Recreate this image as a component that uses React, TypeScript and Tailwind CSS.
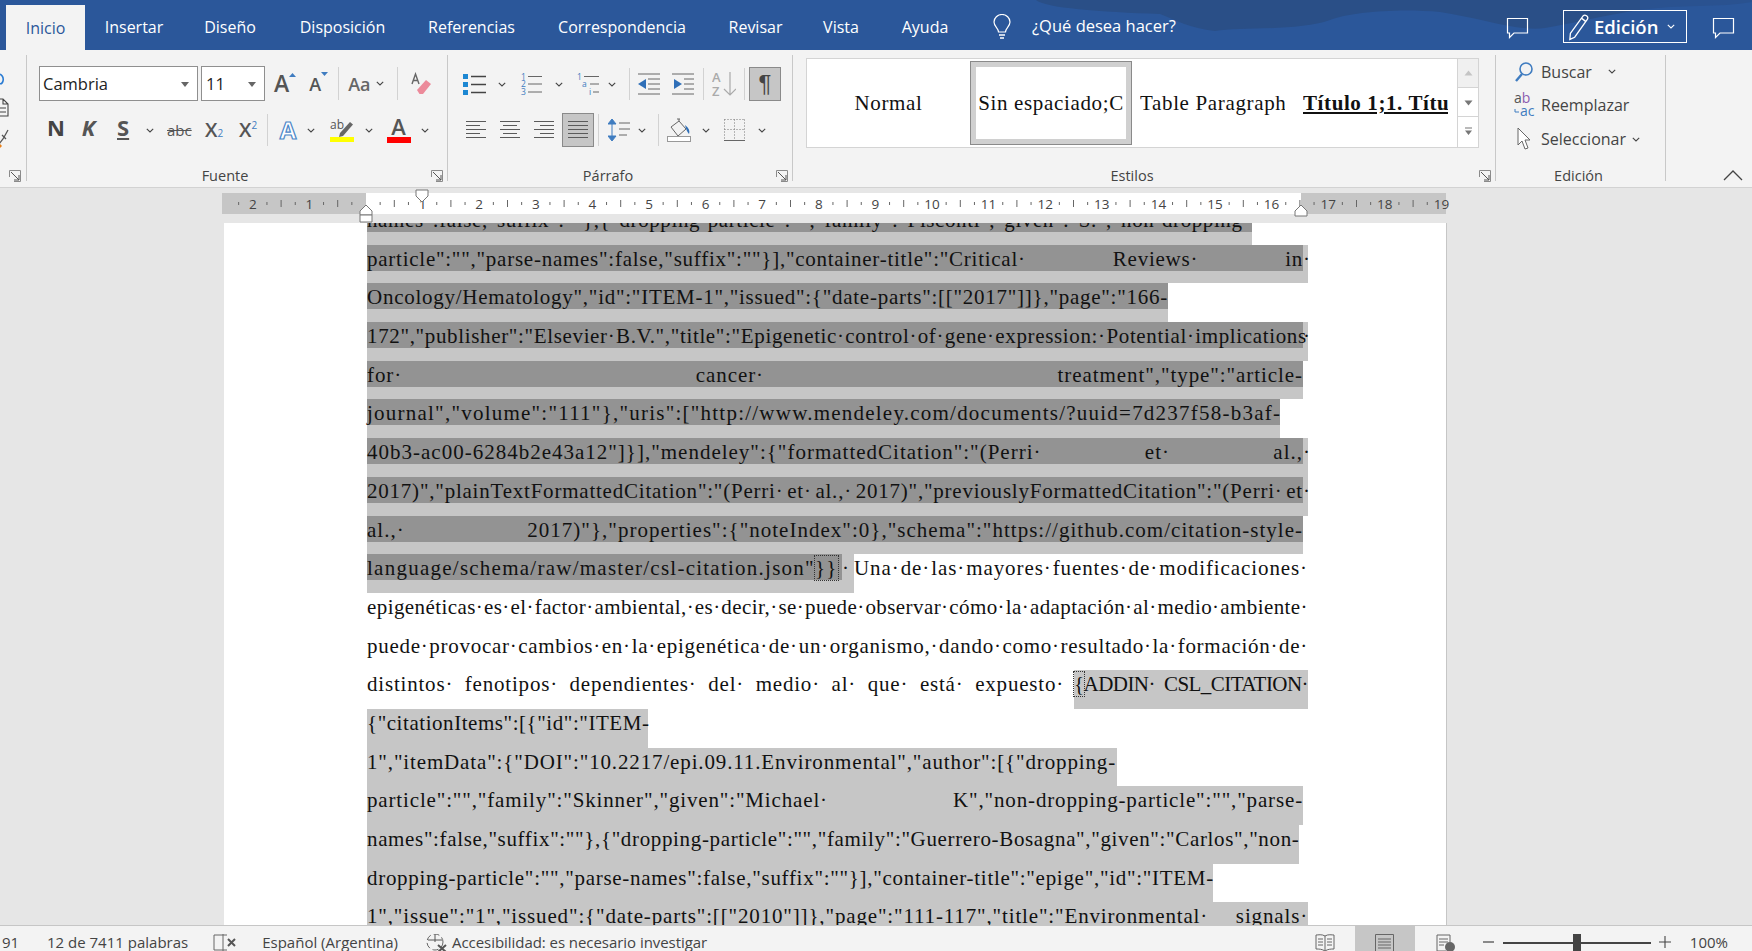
import React from "react"

const UI = "font-['Open_Sans',sans-serif]"
const DOC = "font-['Liberation_Serif',serif]"

const TABS = [
  { label: "Insertar", cls: "w-[98px]" },
  { label: "Diseño", cls: "w-[94px]" },
  { label: "Disposición", cls: "w-[131px]" },
  { label: "Referencias", cls: "w-[127px]" },
  { label: "Correspondencia", cls: "w-[174px]" },
  { label: "Revisar", cls: "w-[93px]" },
  { label: "Vista", cls: "w-[78px]" },
  { label: "Ayuda", cls: "w-[90px]" },
]

function Chevron({ className = "", color = "#444" }: { className?: string; color?: string }) {
  return (
    <svg className={`h-[5px] w-[8px] shrink-0 ${className}`} viewBox="0 0 8 5" fill="none">
      <path d="M0.8 0.8 L4 4 L7.2 0.8" stroke={color} strokeWidth="1.1" />
    </svg>
  )
}

function Launcher() {
  return (
    <svg className="h-[12px] w-[12px]" viewBox="0 0 12 12" fill="none">
      <path d="M0.5 7 V0.5 H11.5 V11.5 H5" stroke="#8a8a8a" />
      <path d="M2 2 L10 10 M10 5 V10 H5" stroke="#555" />
    </svg>
  )
}

function Sep({ className = "h-[33px]" }: { className?: string }) {
  return <div className={`w-px shrink-0 bg-[#d2d2d2] ${className}`} />
}

function GroupSep() {
  return <div className="mt-[5px] h-[126px] w-px shrink-0 bg-[#c8c8c8]" />
}

function GroupFooter({ label, launcher = true }: { label: string; launcher?: boolean }) {
  return (
    <div className="mt-auto flex h-[22px] items-center pr-[4px]">
      <div className="flex-1" />
      <span className="text-[14.5px] leading-[22px] text-[#444]">{label}</span>
      <div className="flex-1" />
      {launcher && (
        <div className="flex w-[20px] justify-end">
          <Launcher />
        </div>
      )}
    </div>
  )
}

function Lines({ rows, w = 20 }: { rows: [number, number][]; w?: number }) {
  return (
    <svg className="h-[20px] shrink-0" width={w} viewBox={`0 0 ${w} 20`} fill="none">
      {rows.map(([a, b], i) => (
        <path key={i} d={`M${a} ${1.5 + i * 4} H${b}`} stroke="#5a5a5a" strokeWidth="1" />
      ))}
    </svg>
  )
}

function Comment({ className = "" }: { className?: string }) {
  return (
    <svg className={`h-[22px] w-[23px] ${className}`} viewBox="0 0 23 22" fill="none">
      <path d="M1.5 1.5 H21.5 V16 H8 L3.5 20.5 V16 H1.5 Z" stroke="#fff" strokeWidth="1.2" />
    </svg>
  )
}

function TitleBar() {
  return (
    <div className={`relative flex h-[50px] shrink-0 overflow-hidden bg-[#2b579a] text-[16px] text-white ${UI}`}>
      <svg className="absolute left-0 top-0 h-[50px] w-[1752px]" viewBox="0 0 1752 50">
        <path d="M1036 0 C1045 8 1100 12 1160 14 C1175 20 1190 28 1215 31 C1240 27 1300 31 1330 20 C1350 12 1400 8 1440 12 C1480 18 1520 32 1545 28 C1570 24 1600 16 1640 10 V0 Z" fill="#2a4f87" />
        <path d="M1640 10 C1680 4 1720 8 1752 2 V0 H1640 Z" fill="#2a5290" />
      </svg>
      <div className="relative ml-[6px] mt-[5px] flex h-[45px] w-[79px] items-center justify-center bg-[#f3f3f3] text-[#2b579a]">Inicio</div>
      {TABS.map((t) => (
        <div key={t.label} className={`relative flex h-full items-center justify-center pt-[4px] ${t.cls}`}>
          {t.label}
        </div>
      ))}
      <svg className="relative ml-[22px] mt-[14px] h-[26px] w-[20px]" viewBox="0 0 20 26" fill="none">
        <path d="M6.5 18 C6.5 14 2 12.5 2 8 A8 7.5 0 0 1 18 8 C18 12.5 13.5 14 13.5 18 Z" stroke="#fff" strokeWidth="1.2" />
        <path d="M7 21 H13 M8 24 H12" stroke="#fff" strokeWidth="1.4" />
      </svg>
      <div className="relative ml-[20px] flex items-center pt-[3px] text-[16.5px]">¿Qué desea hacer?</div>
      <Comment className="relative ml-auto mt-[17px]" />
      <div className="relative ml-[34px] mt-[10px] flex h-[33px] w-[124px] items-center border border-white pl-[3px]">
        <svg className="h-[28px] w-[24px]" viewBox="0 0 22 26" fill="none">
          <path d="M3 19 L15 2.5 C16.5 1 20 3 19 5.5 L7 22.5 L2.5 24.5 Z M13.5 5 L17.5 8" stroke="#fff" strokeWidth="1.2" />
        </svg>
        <span className="ml-[3px] text-[18.5px] font-semibold">Edición</span>
        <Chevron className="ml-[9px] h-[4px] w-[6px]" color="#fff" />
      </div>
      <Comment className="relative ml-[25px] mr-[17px] mt-[17px]" />
    </div>
  )
}

function ClipboardStub() {
  return (
    <div className="relative h-full w-[26px] shrink-0">
      <svg className="mt-[5px] h-[100px] w-[12px]" viewBox="0 0 12 100" fill="none">
        <path d="M-2 20 C1 18 4 22 3 26 C2 30 -1 29 -2 27" stroke="#2b7cd3" strokeWidth="1.6" />
        <path d="M-2 44 H3 L8 49 V61 H-2 Z M3 44 V49 H8 M-2 53 H6 M-2 57 H6" stroke="#444" strokeWidth="1.1" />
        <path d="M8 75 L3 84 L-1 89 M2 80 L6 84 M0 90 L-3 94" stroke="#555" strokeWidth="1.3" />
        <path d="M-1 90 L1 92" stroke="#e8801a" strokeWidth="3" />
      </svg>
      <div className="absolute bottom-[5px] left-[9px]">
        <Launcher />
      </div>
    </div>
  )
}

function FontGroup() {
  return (
    <div className="flex h-full w-[420px] shrink-0 flex-col">
      <div className="ml-[12px] mt-[16px] flex h-[35px] items-center">
        <div className="flex h-[35px] w-[159px] items-center justify-between border border-[#8f8f8f] bg-white pl-[3px] pr-[8px] pt-[1px] text-[16.5px] text-[#222]">
          Cambria
          <svg className="h-[5px] w-[8px]" viewBox="0 0 8 5"><path d="M0 0 H8 L4 5 Z" fill="#666" /></svg>
        </div>
        <div className="ml-[3px] flex h-[35px] w-[64px] items-center justify-between border border-[#8f8f8f] bg-white pl-[4px] pr-[8px] pt-[1px] text-[16.5px] text-[#222]">
          11
          <svg className="h-[5px] w-[8px]" viewBox="0 0 8 5"><path d="M0 0 H8 L4 5 Z" fill="#666" /></svg>
        </div>
        <span className="ml-[9px] text-[23px] font-semibold leading-none text-[#555]">A</span>
        <svg className="mb-[18px] h-[4px] w-[7px]" viewBox="0 0 7 4"><path d="M0 4 L3.5 0 L7 4 Z" fill="#3f7cc0" /></svg>
        <span className="ml-[13px] text-[18px] font-semibold leading-none text-[#555]">A</span>
        <svg className="mb-[20px] h-[4px] w-[7px]" viewBox="0 0 7 4"><path d="M0 0 H7 L3.5 4 Z" fill="#3f7cc0" /></svg>
        <Sep className="ml-[10px] h-[33px]" />
        <span className="ml-[9px] text-[18px] font-semibold leading-none text-[#666]">Aa</span>
        <Chevron className="ml-[6px]" />
        <Sep className="ml-[13px] h-[33px]" />
        <svg className="ml-[13px] h-[24px] w-[21px]" viewBox="0 0 21 24" fill="none">
          <path d="M1 12 L4.5 2 L8 12 M2.5 8.5 H6.5" stroke="#666" strokeWidth="1.4" />
          <path d="M6 18 L15 8 L20 12 L12 22 L8.5 22 Z" fill="#ec8a9a" />
        </svg>
      </div>
      <div className="ml-[20px] mt-[12px] flex h-[34px] items-center text-[#444]">
        <span className="mb-[6px] w-[16px] text-center text-[22px] font-bold leading-none">N</span>
        <span className="mb-[6px] ml-[18px] w-[15px] text-center text-[22px] font-bold italic leading-none text-[#555]">K</span>
        <span className="mb-[6px] ml-[21px] w-[12px] text-center text-[22px] font-bold leading-none text-[#555] underline">S</span>
        <Chevron className="ml-[17px]" />
        <span className="ml-[13px] w-[24px] text-center text-[15px] leading-none text-[#555] line-through">abc</span>
        <span className="ml-[14px] flex w-[22px] items-baseline text-[20px] font-semibold leading-none text-[#555]">
          X<span className="text-[10px] font-normal text-[#3f7cc0]">2</span>
        </span>
        <span className="ml-[12px] flex w-[22px] items-start text-[20px] font-semibold leading-none text-[#555]">
          X<span className="text-[10px] font-normal text-[#3f7cc0]">2</span>
        </span>
        <Sep className="ml-[6px] h-[32px]" />
        <span className="ml-[11px] w-[18px] text-center text-[24px] font-bold leading-none text-white [-webkit-text-stroke:1.2px_#4a86c8]">A</span>
        <Chevron className="ml-[10px]" />
        <svg className="ml-[15px] h-[24px] w-[24px]" viewBox="0 0 24 24" fill="none">
          <text x="0" y="11" fontSize="12" fill="#555" fontFamily="Open Sans">ab</text>
          <path d="M10 15 L20 4 L23 6.5 L13 18 L9 19 Z" fill="#666" />
          <rect x="0" y="19" width="24" height="5.5" fill="#ffff00" />
        </svg>
        <Chevron className="ml-[11px]" />
        <div className="ml-[14px] flex w-[23px] flex-col items-center">
          <span className="text-[22px] font-semibold leading-[19px] text-[#555]">A</span>
          <div className="mt-[1px] h-[6px] w-[24px] bg-[#ff0000]" />
        </div>
        <Chevron className="ml-[11px]" />
      </div>
      <GroupFooter label="Fuente" />
    </div>
  )
}

function ListIcon({ marks, lines }: { marks: [string, number][]; lines: string }) {
  return (
    <svg className="h-[22px] w-[23px] overflow-visible" viewBox="0 0 23 22" fill="none">
      {marks.map(([m, x], i) => (
        <text key={i} x={x} y={6.5 + i * 7.7} fontSize="8.5" fill="#3f7cc0" fontFamily="Open Sans">{m}</text>
      ))}
      <path d={lines} stroke="#666" />
    </svg>
  )
}

function ParagraphGroup() {
  return (
    <div className="flex h-full w-[344px] shrink-0 flex-col">
      <div className="ml-[15px] mt-[17px] flex h-[34px] items-center">
        <svg className="h-[22px] w-[23px]" viewBox="0 0 23 22" fill="none">
          <rect x="0" y="1" width="5" height="5" fill="#1c87d2" />
          <rect x="0" y="9" width="5" height="5" fill="#1c87d2" />
          <rect x="0" y="17" width="5" height="5" fill="#1c87d2" />
          <path d="M8 3.5 H23 M8 11.5 H23 M8 19.5 H23" stroke="#444" strokeWidth="1.4" />
        </svg>
        <Chevron className="ml-[12px]" />
        <div className="ml-[14px]">
          <ListIcon marks={[["1", 1], ["2", 1], ["3", 1]]} lines="M8 3.5 H22 M8 11 H22 M8 19 H22" />
        </div>
        <Chevron className="ml-[12px]" />
        <div className="ml-[14px]">
          <ListIcon marks={[["1", 0], ["a", 5], ["i", 12]]} lines="M7 3.5 H22 M13 11 H22 M16 19 H22" />
        </div>
        <Chevron className="ml-[8px]" />
        <Sep className="ml-[13px] h-[32px]" />
        <svg className="ml-[8px] h-[22px] w-[22px]" viewBox="0 0 22 22" fill="none">
          <path d="M0 1 H22 M10 6 H22 M10 11 H22 M10 16 H22 M0 21 H22" stroke="#666" />
          <path d="M8 6 V16 L0 11 Z" fill="#2f6fb8" />
        </svg>
        <svg className="ml-[12px] h-[22px] w-[22px]" viewBox="0 0 22 22" fill="none">
          <path d="M0 1 H22 M12 6 H22 M12 11 H22 M12 16 H22 M0 21 H22" stroke="#666" />
          <path d="M2 6 V16 L10 11 Z" fill="#2f6fb8" />
        </svg>
        <Sep className="ml-[9px] h-[32px]" />
        <svg className="ml-[8px] h-[26px] w-[24px]" viewBox="0 0 24 26" fill="none">
          <text x="0" y="11" fontSize="13" fill="#aaa" fontFamily="Open Sans" fontWeight="600">A</text>
          <text x="0" y="25" fontSize="13" fill="#aaa" fontFamily="Open Sans" fontWeight="600">Z</text>
          <path d="M18 1 V24 M12 18 L18 24 L24 18" stroke="#aaa" strokeWidth="1.2" />
        </svg>
        <Sep className="ml-[8px] h-[32px]" />
        <div className="ml-[4px] flex h-[34px] w-[32px] items-center justify-center border border-[#8a8a8a] bg-[#c6c6c6] text-[24px] leading-none text-[#444] font-['Liberation_Sans',sans-serif]">¶</div>
      </div>
      <div className="ml-[18px] mt-[12px] flex h-[34px] items-center">
        <Lines rows={[[0, 20], [0, 14], [0, 20], [0, 14], [0, 20]]} />
        <div className="ml-[14px]"><Lines rows={[[0, 20], [3, 17], [0, 20], [3, 17], [0, 20]]} /></div>
        <div className="ml-[14px]"><Lines rows={[[0, 20], [6, 20], [0, 20], [6, 20], [0, 20]]} /></div>
        <div className="ml-[8px] flex h-[34px] w-[32px] items-center justify-center border border-[#8a8a8a] bg-[#c6c6c6]">
          <Lines rows={[[0, 20], [0, 20], [0, 20], [0, 20], [0, 20]]} />
        </div>
        <Sep className="ml-[4px] h-[32px]" />
        <svg className="ml-[9px] h-[24px] w-[22px]" viewBox="0 0 22 24" fill="none">
          <path d="M4 5 V19 M4 1 L8 6 H0 Z M4 23 L8 18 H0 Z" stroke="#3f7cc0" fill="#3f7cc0" strokeWidth="1" />
          <path d="M11 5 H22 M11 11 H22 M11 17 H19" stroke="#666" />
        </svg>
        <Chevron className="ml-[8px]" />
        <Sep className="ml-[12px] h-[32px]" />
        <svg className="ml-[8px] h-[24px] w-[24px]" viewBox="0 0 24 24" fill="none">
          <path d="M4 9 L12 3 L19 11 L11 18 Z M12 3 V1 M10 1 H13" stroke="#666" />
          <path d="M18 7 C22 10 23 13 22 16 C20 14 19 11 18 7" fill="#2f6fb8" />
          <rect x="0.5" y="18.5" width="23" height="5" fill="#fff" stroke="#999" />
        </svg>
        <Chevron className="ml-[11px]" />
        <svg className="ml-[14px] h-[22px] w-[21px]" viewBox="0 0 21 22" fill="none">
          <path d="M0.5 0.5 H20.5 M0.5 0.5 V21 M20.5 0.5 V21 M10.5 0.5 V21 M0.5 10.5 H20.5" stroke="#777" strokeDasharray="1 2" />
          <path d="M0 21.5 H21" stroke="#666" />
        </svg>
        <Chevron className="ml-[13px]" />
      </div>
      <GroupFooter label="Párrafo" />
    </div>
  )
}

function ScrollBtn({ dir }: { dir: "up" | "down" | "more" }) {
  return (
    <div className={`flex h-[29px] items-center justify-center border-b border-[#d4d4d4] last:border-b-0 ${dir === "up" ? "bg-[#f0f0f0]" : "bg-white"}`}>
      <svg className="h-[9px] w-[9px]" viewBox="0 0 9 9">
        {dir === "up" && <path d="M0.5 6.5 L4.5 1.5 L8.5 6.5 Z" fill="#c4c4c4" />}
        {dir === "down" && <path d="M0.5 2.5 H8.5 L4.5 7.5 Z" fill="#777" />}
        {dir === "more" && <path d="M1 0.5 H8 V1.5 H1 Z M1 3.5 H8 L4.5 8 Z" fill="#777" />}
      </svg>
    </div>
  )
}

function StylesGroup() {
  return (
    <div className="flex h-full w-[702px] shrink-0 flex-col">
      <div className={`ml-[13px] mt-[8px] flex h-[90px] w-[673px] border border-[#d4d4d4] bg-white text-[21px] leading-none text-[#111] ${DOC}`}>
        <div className="flex w-[163px] items-center justify-center tracking-[0.65px]">Normal</div>
        <div className="mt-[2px] flex h-[84px] w-[162px] items-center justify-center overflow-hidden whitespace-nowrap border border-[#8a8a8a] bg-white outline-[5px] -outline-offset-[6px] outline-[#d0d0d0] [outline-style:solid] tracking-[0.65px]">
          Sin espaciado;C
        </div>
        <div className="ml-[8px] mr-[8px] flex w-[145px] items-center overflow-hidden whitespace-nowrap tracking-[0.65px]">Table Paragraph</div>
        <div className="ml-[10px] flex w-[145px] items-center overflow-hidden whitespace-nowrap font-bold underline tracking-[0.6px]">Título 1;1. Títu</div>
        <div className="ml-auto flex w-[21px] flex-col border-l border-[#d4d4d4]">
          <ScrollBtn dir="up" />
          <ScrollBtn dir="down" />
          <ScrollBtn dir="more" />
        </div>
      </div>
      <GroupFooter label="Estilos" />
    </div>
  )
}

function EditGroup() {
  return (
    <div className="flex h-full w-[169px] shrink-0 flex-col">
      <div className="ml-[18px] mt-[5px] flex flex-col text-[16px] leading-none text-[#444]">
        <div className="flex h-[33px] items-center">
          <svg className="h-[21px] w-[20px]" viewBox="0 0 20 21" fill="none">
            <circle cx="12" cy="8" r="6" stroke="#3f7cc0" strokeWidth="1.6" />
            <path d="M8 13 L2 20" stroke="#3f7cc0" strokeWidth="2.4" />
          </svg>
          <span className="ml-[7px]">Buscar</span>
          <Chevron className="ml-[16px]" />
        </div>
        <div className="flex h-[34px] items-center">
          <svg className="h-[26px] w-[22px]" viewBox="0 0 22 26">
            <text x="0" y="11" fontSize="14" fill="#555" fontFamily="Open Sans">a<tspan fill="#8a5cb0">b</tspan></text>
            <text x="6" y="24" fontSize="14" fill="#3f7cc0" fontFamily="Open Sans">ac</text>
            <path d="M1 17 V20 H5" stroke="#3f7cc0" fill="none" />
          </svg>
          <span className="ml-[5px]">Reemplazar</span>
        </div>
        <div className="flex h-[34px] items-center">
          <svg className="h-[24px] w-[20px]" viewBox="0 0 20 24" fill="none">
            <path d="M4 1 V18 L8 14 L11 22 L14 21 L11 13 L16 13 Z" stroke="#666" fill="#fff" />
          </svg>
          <span className="ml-[7px]">Seleccionar</span>
          <Chevron className="ml-[6px]" />
        </div>
      </div>
      <GroupFooter label="Edición" launcher={false} />
    </div>
  )
}

function Ribbon() {
  return (
    <div className={`flex h-[138px] shrink-0 border-b border-[#d2d2d2] bg-[#f3f3f3] ${UI}`}>
      <ClipboardStub />
      <GroupSep />
      <FontGroup />
      <GroupSep />
      <ParagraphGroup />
      <GroupSep />
      <StylesGroup />
      <GroupSep />
      <EditGroup />
      <GroupSep />
      <div className="flex flex-1 items-end justify-end pb-[6px] pr-[9px]">
        <svg className="h-[11px] w-[20px]" viewBox="0 0 20 11" fill="none">
          <path d="M1 10 L10 1 L19 10" stroke="#444" strokeWidth="1.3" />
        </svg>
      </div>
    </div>
  )
}

function Ruler() {
  const unit = 56.6
  const ticks: number[] = []
  for (let q = -10; q <= 76; q++) ticks.push(q)
  const nums = [-2, -1, 1, 2, 3, 4, 5, 6, 7, 8, 9, 10, 11, 12, 13, 14, 15, 16, 17, 18, 19]
  return (
    <svg className={`ml-[222px] block h-[21px] w-[1224px] overflow-visible ${UI}`} viewBox="0 0 1224 21">
      <rect width="1224" height="21" fill="#c6c6c6" />
      <rect x="144" width="935" height="21" fill="#fff" />
      {ticks.map((q) => {
        const x = 144 + (q * unit) / 4
        if (q % 4 === 0 || x < 3 || x > 1222) return null
        const long = Math.abs(q % 4) === 2
        return <path key={q} d={`M${x} ${long ? 7 : 9} V${long ? 14 : 12}`} stroke="#666" />
      })}
      {nums.map((n) => (
        <text key={n} x={144 + n * unit} y="15.5" fontSize="13.5" fill="#444" textAnchor="middle">{Math.abs(n)}</text>
      ))}
      <path d="M194 -3 H206 V3 L200 9 L194 3 Z" fill="#fff" stroke="#777" />
      <path d="M144 12 L150 18 V22 H138 V18 Z" fill="#fff" stroke="#777" />
      <path d="M138 22 H150 V29 H138 Z" fill="#fff" stroke="#777" />
      <path d="M1079 12 L1085 18 V23 H1073 V18 Z" fill="#fff" stroke="#777" />
    </svg>
  )
}

type Shaded = { text: string; light: string; dark: string; track: string; dot?: boolean }

const SHADED_TOP: Shaded[] = [
  { text: 'names":false,"suffix":""},{"dropping-particle":"","family":"Pisconti","given":"S.","non-dropping-', light: "w-[885px]", dark: "w-[885px]", track: "tracking-[0.6px]" },
  { text: 'particle":"","parse-names":false,"suffix":""}],"container-title":"Critical· Reviews· in', light: "w-[941px]", dark: "w-[936px]", track: "tracking-[0.75px]", dot: true },
  { text: 'Oncology/Hematology","id":"ITEM-1","issued":{"date-parts":[["2017"]]},"page":"166-', light: "w-[801px]", dark: "w-[801px]", track: "tracking-[0.74px]" },
  { text: '172","publisher":"Elsevier· B.V.","title":"Epigenetic· control· of· gene· expression:· Potential· implications', light: "w-[941px]", dark: "w-[936px]", track: "tracking-[0.65px]", dot: true },
  { text: 'for· cancer· treatment","type":"article-', light: "w-[936px]", dark: "w-[936px]", track: "tracking-[0.93px]" },
  { text: 'journal","volume":"111"},"uris":["http://www.mendeley.com/documents/?uuid=7d237f58-b3af-', light: "w-[913px]", dark: "w-[913px]", track: "tracking-[1.23px]" },
  { text: '40b3-ac00-6284b2e43a12"]}],"mendeley":{"formattedCitation":"(Perri· et· al.,', light: "w-[941px]", dark: "w-[936px]", track: "tracking-[1px]", dot: true },
  { text: '2017)","plainTextFormattedCitation":"(Perri· et· al.,· 2017)","previouslyFormattedCitation":"(Perri· et', light: "w-[941px]", dark: "w-[936px]", track: "tracking-[0.78px]", dot: true },
  { text: 'al.,· 2017)"},"properties":{"noteIndex":0},"schema":"https://github.com/citation-style-', light: "w-[936px]", dark: "w-[936px]", track: "tracking-[1.02px]" },
]

const SHADED_BOTTOM = [
  { text: '{"citationItems":[{"id":"ITEM-', cls: "w-[281px] tracking-[0.55px]" },
  { text: '1","itemData":{"DOI":"10.2217/epi.09.11.Environmental","author":[{"dropping-', cls: "w-[750px] tracking-[0.86px]" },
  { text: 'particle":"","family":"Skinner","given":"Michael· K","non-dropping-particle":"","parse-', cls: "w-[936px] tracking-[0.85px]" },
  { text: 'names":false,"suffix":""},{"dropping-particle":"","family":"Guerrero-Bosagna","given":"Carlos","non-', cls: "w-[932px] tracking-[0.65px]" },
  { text: 'dropping-particle":"","parse-names":false,"suffix":""}],"container-title":"epige","id":"ITEM-', cls: "w-[846px] tracking-[0.71px]" },
  { text: '1","issue":"1","issued":{"date-parts":[["2010"]]},"page":"111-117","title":"Environmental· signals·', cls: "w-[941px] tracking-[0.85px]" },
]

const FIT = "whitespace-nowrap leading-[28px] [word-spacing:-0.25em] [text-align-last:justify]"

function DocText() {
  return (
    <div className={`-mt-[17px] ml-[143px] w-[941px] text-[21px] text-[#111] ${DOC}`}>
      {SHADED_TOP.map((l) => (
        <div key={l.text} className={`h-[38.7px] bg-[#c6c6c6] ${l.light}`}>
          <div className="flex h-[26px]">
            <div className={`h-[26px] shrink-0 bg-[#939393] ${FIT} ${l.dark} ${l.track}`}>{l.text}</div>
            {l.dot && <span className="w-[5px] leading-[28px]">·</span>}
          </div>
        </div>
      ))}
      <div className="flex h-[38.7px]">
        <div className="h-full w-[487px] shrink-0 bg-[#c6c6c6]">
          <div className="flex h-[26px]">
            <div className={`h-[26px] w-[475px] shrink-0 bg-[#939393] tracking-[1.25px] ${FIT}`}>
              language/schema/raw/master/csl-citation.json"
              <span className="outline-dotted outline-1 outline-[#333]">{"}}"}</span>
            </div>
            <span className="w-[12px] leading-[28px]">·</span>
          </div>
        </div>
        <div className={`w-[454px] tracking-[0.9px] ${FIT}`}>Una· de· las· mayores· fuentes· de· modificaciones·</div>
      </div>
      <div className={`h-[38.7px] tracking-[0.42px] ${FIT}`}>epigenéticas· es· el· factor· ambiental,· es· decir,· se· puede· observar· cómo· la· adaptación· al· medio· ambiente·</div>
      <div className={`h-[38.7px] tracking-[0.72px] ${FIT}`}>puede· provocar· cambios· en· la· epigenética· de· un· organismo,· dando· como· resultado· la· formación· de·</div>
      <div className="flex h-[38.7px]">
        <div className={`w-[697px] tracking-[0.8px] ${FIT}`}>distintos· fenotipos· dependientes· del· medio· al· que· está· expuesto·</div>
        <div className={`ml-[10px] h-full w-[234px] bg-[#c6c6c6] tracking-[-0.55px] ${FIT}`}>
          <span className="outline-dotted outline-1 outline-[#333]">{"{"}</span>ADDIN· CSL_CITATION·
        </div>
      </div>
      {SHADED_BOTTOM.map((l) => (
        <div key={l.text} className={`h-[38.7px] bg-[#c6c6c6] ${FIT} ${l.cls}`}>{l.text}</div>
      ))}
    </div>
  )
}

function Canvas() {
  return (
    <div className="flex min-h-0 flex-1 flex-col bg-[#e6e6e6] pt-[5px]">
      <Ruler />
      <div className="ml-[224px] mt-[9px] min-h-0 w-[1223px] flex-1 overflow-hidden border-r border-[#c6c6c6] bg-white">
        <DocText />
      </div>
    </div>
  )
}

function StatusBar() {
  return (
    <div className={`flex h-[26px] shrink-0 items-start border-t border-[#c6c6c6] bg-[#f3f3f3] text-[15px] leading-[32px] text-[#444] ${UI}`}>
      <span className="ml-[2px] w-[45px] shrink-0">91</span>
      <span>12 de 7411 palabras</span>
      <svg className="ml-[25px] mt-[8px] h-[18px] w-[24px] shrink-0" viewBox="0 0 24 18" fill="none">
        <path d="M10 1 H1 V16 H10 M10 0 V18 M10 1 H14 M10 16 H14" stroke="#666" />
        <path d="M15 5 L22 12 M22 5 L15 12" stroke="#555" strokeWidth="2" />
      </svg>
      <span className="ml-[25px]">Español (Argentina)</span>
      <svg className="ml-[26px] mt-[8px] h-[19px] w-[24px] shrink-0" viewBox="0 0 24 19" fill="none">
        <circle cx="11" cy="8" r="8" stroke="#666" strokeDasharray="6 3" />
        <path d="M11 0 V8 M4 6 H18" stroke="#555" />
        <path d="M14 11 L22 18 M22 11 L14 18" stroke="#555" strokeWidth="2" />
      </svg>
      <span className="ml-[4px] tracking-[-0.05px]">Accesibilidad: es necesario investigar</span>
      <svg className="ml-auto mt-[8px] h-[18px] w-[20px] shrink-0" viewBox="0 0 20 18" fill="none">
        <path d="M10 2 C7 0 3 1 1 1 V15 C4 15 7 15 10 17 C13 15 16 15 19 15 V1 C17 1 13 0 10 2 Z M10 2 V17 M3 5 H8 M3 8 H8 M3 11 H8 M12 5 H17 M12 8 H17 M12 11 H17" stroke="#666" />
      </svg>
      <div className="ml-[20px] flex h-full w-[60px] shrink-0 justify-center bg-[#c6c6c6] pt-[8px]">
        <svg className="h-[18px] w-[19px]" viewBox="0 0 19 18" fill="none">
          <path d="M0.5 0.5 H18.5 V18 M0.5 0.5 V18 M3 5 H16 M3 8 H16 M3 11 H16 M3 14 H16" stroke="#666" />
        </svg>
      </div>
      <svg className="ml-[21px] mt-[8px] h-[18px] w-[20px] shrink-0" viewBox="0 0 20 18" fill="none">
        <path d="M10 17 H1 V1 H14 V8 M3 5 H12 M3 8 H12 M3 11 H8" stroke="#666" />
        <circle cx="14" cy="13" r="5" fill="#666" />
      </svg>
      <svg className="ml-[27px] mt-[15px] h-[2px] w-[11px] shrink-0" viewBox="0 0 11 2"><path d="M0 1 H11" stroke="#444" strokeWidth="1.2" /></svg>
      <div className="ml-[9px] mt-[8px] flex h-[18px] w-[148px] shrink-0 items-center">
        <div className="h-[2px] w-[70px] bg-[#444]" />
        <div className="h-[18px] w-[8px] bg-[#444]" />
        <div className="h-[2px] w-[70px] bg-[#444]" />
      </div>
      <svg className="ml-[8px] mt-[10px] h-[12px] w-[12px] shrink-0" viewBox="0 0 12 12"><path d="M0 6 H12 M6 0 V12" stroke="#444" strokeWidth="1.1" /></svg>
      <span className="ml-[19px] mr-[24px]">100%</span>
    </div>
  )
}

export default function App() {
  return (
    <div className="flex h-[951px] w-[1752px] flex-col overflow-hidden">
      <TitleBar />
      <Ribbon />
      <Canvas />
      <StatusBar />
    </div>
  )
}
